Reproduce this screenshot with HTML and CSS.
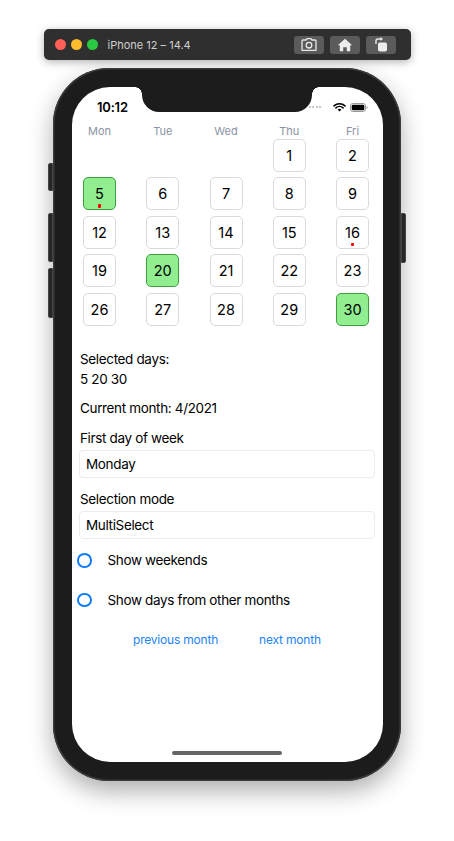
FILE: index.html
```html
<!DOCTYPE html>
<html lang="en">
<head>
<meta charset="utf-8">
<title>iPhone 12 – 14.4</title>
<link rel="stylesheet" href="styles.css">
</head>
<body>
<div class="desk">
  <div class="titlebar">
    <div class="lights">
      <span class="light red"></span>
      <span class="light yellow"></span>
      <span class="light green"></span>
    </div>
    <div class="title">iPhone 12 – 14.4</div>
    <div class="tools">
      <span class="tool">
        <svg width="16" height="13" viewBox="0 0 16 13"><path d="M5 2 L6.2 0.5 H9.8 L11 2 H14 Q15 2 15 3 V11.5 Q15 12.5 14 12.5 H2 Q1 12.5 1 11.5 V3 Q1 2 2 2 Z" fill="none" stroke="#e8e8e8" stroke-width="1.3"/><circle cx="8" cy="7.2" r="2.8" fill="none" stroke="#e8e8e8" stroke-width="1.3"/></svg>
      </span>
      <span class="tool">
        <svg width="16" height="14" viewBox="0 0 16 14"><path d="M8 0.8 L15.2 7.2 H13.2 V13.2 H9.8 V9.2 H6.2 V13.2 H2.8 V7.2 H0.8 Z" fill="#ececec"/></svg>
      </span>
      <span class="tool">
        <svg width="16" height="15" viewBox="0 0 16 15"><rect x="5" y="5.5" width="9" height="9" rx="1.8" fill="#ececec"/><path d="M3 7 V4 Q3 2 5 2 H8" fill="none" stroke="#ececec" stroke-width="1.4"/><path d="M7.5 0 L10 2 L7.5 4 Z" fill="#ececec"/></svg>
      </span>
    </div>
  </div>

  <div class="device">
    <span class="side-btn left mute"></span>
    <span class="side-btn left vol-up"></span>
    <span class="side-btn left vol-down"></span>
    <span class="side-btn right power"></span>

    <div class="screen">
      <div class="notch"></div>

      <div class="status">
        <span class="clock">10:12</span>
        <span class="indicators">
          <span class="signal"><i></i><i></i><i></i><i></i></span>
          <svg class="wifi" width="13" height="10" viewBox="0 0 13 10"><path d="M6.5 9.6 L4.6 7.6 A2.8 2.8 0 0 1 8.4 7.6 Z" fill="#000"/><path d="M2.9 5.9 A5.2 5.2 0 0 1 10.1 5.9" fill="none" stroke="#000" stroke-width="1.5" stroke-linecap="round"/><path d="M1 3.9 A7.9 7.9 0 0 1 12 3.9" fill="none" stroke="#000" stroke-width="1.5" stroke-linecap="round"/></svg>
          <svg class="battery" width="18" height="9" viewBox="0 0 18 9"><rect x="0.5" y="0.5" width="15" height="8" rx="2.2" fill="none" stroke="#999" stroke-width="1"/><rect x="1.7" y="1.7" width="12.6" height="5.6" rx="1.2" fill="#000"/><path d="M16.6 3 Q17.6 3.3 17.6 4.5 Q17.6 5.7 16.6 6 Z" fill="#999"/></svg>
        </span>
      </div>

      <div class="calendar">
        <div class="weekdays">
          <span>Mon</span><span>Tue</span><span>Wed</span><span>Thu</span><span>Fri</span>
        </div>
        <div class="days">
          <span class="blank"></span><span class="blank"></span><span class="blank"></span>
          <span class="day">1</span><span class="day">2</span>
          <span class="day selected">5<i class="mark"></i></span><span class="day">6</span><span class="day">7</span><span class="day">8</span><span class="day">9</span>
          <span class="day">12</span><span class="day">13</span><span class="day">14</span><span class="day">15</span><span class="day">16<i class="mark"></i></span>
          <span class="day">19</span><span class="day selected">20</span><span class="day">21</span><span class="day">22</span><span class="day">23</span>
          <span class="day">26</span><span class="day">27</span><span class="day">28</span><span class="day">29</span><span class="day selected">30</span>
        </div>
      </div>

      <div class="form">
        <p class="label top">Selected days:</p>
        <p class="label">5 20 30</p>
        <p class="label gap">Current month: 4/2021</p>
        <p class="label gap">First day of week</p>
        <div class="field">Monday</div>
        <p class="label gap-lg">Selection mode</p>
        <div class="field">MultiSelect</div>
        <div class="radio-row first"><span class="radio"></span><span>Show weekends</span></div>
        <div class="radio-row"><span class="radio"></span><span>Show days from other months</span></div>
        <div class="nav">
          <span class="link">previous month</span>
          <span class="link">next month</span>
        </div>
      </div>

      <div class="home-indicator"></div>
    </div>
  </div>
</div>
</body>
</html>
```

FILE: styles.css
```css
* { box-sizing: border-box; }

html, body { margin: 0; }

body {
  width: 454px;
  height: 841px;
  background: #fff;
  overflow: hidden;
  font-family: Inter, "Noto Sans", sans-serif;
  color: #000;
}

.desk {
  display: flex;
  flex-direction: column;
  align-items: center;
  padding-top: 29px;
  gap: 8px;
}

/* simulator window title bar */
.titlebar {
  width: 367px;
  height: 31px;
  background: #2f2f2f;
  border-radius: 5px;
  display: flex;
  align-items: center;
  padding: 0 15px 0 11px;
  box-shadow: 0 2px 8px rgba(0, 0, 0, 0.3);
}

.lights { display: flex; gap: 5px; }

.light {
  width: 11px;
  height: 11px;
  border-radius: 50%;
}
.light.red { background: #fe5f57; }
.light.yellow { background: #febc2e; }
.light.green { background: #28c840; }

.title {
  margin-left: 10px;
  font-size: 11px;
  color: #cfcfcf;
  flex: 1;
}

.tools { display: flex; gap: 6px; }

.tool {
  width: 30px;
  height: 18px;
  border-radius: 3px;
  background: #5b5b5b;
  display: flex;
  align-items: center;
  justify-content: center;
}

/* phone body */
.device {
  position: relative;
  width: 348px;
  height: 713px;
  padding: 19px 18px 19px 19px;
  background: #1c1c1c;
  border-radius: 56px;
  box-shadow: inset 0 0 0 1.5px #3b3b3b, 0 10px 24px rgba(0, 0, 0, 0.32);
}

.side-btn {
  position: absolute;
  width: 5px;
  background: #262626;
  border: 1px solid #454545;
}
.side-btn.left { left: -5px; border-radius: 2px 0 0 2px; }
.side-btn.right { right: -5px; border-radius: 0 2px 2px 0; }
.mute { top: 95px; height: 28px; }
.vol-up { top: 145px; height: 49px; }
.vol-down { top: 200px; height: 50px; }
.power { top: 145px; height: 50px; }

.screen {
  position: relative;
  width: 311px;
  height: 675px;
  background: #fff;
  border-radius: 38px;
  overflow: hidden;
  display: flex;
  flex-direction: column;
}

.notch {
  position: absolute;
  top: 0;
  left: 70px;
  width: 170px;
  height: 25px;
  background: #1c1c1c;
  border-radius: 0 0 17px 17px;
}
.notch::before,
.notch::after {
  content: "";
  position: absolute;
  top: 0;
  width: 7px;
  height: 7px;
}
.notch::before {
  left: -7px;
  background: radial-gradient(circle at 0 100%, transparent 6.5px, #1c1c1c 7px);
}
.notch::after {
  right: -7px;
  background: radial-gradient(circle at 100% 100%, transparent 6.5px, #1c1c1c 7px);
}

/* status bar */
.status {
  height: 37px;
  padding: 10px 15px 0 25px;
  display: flex;
  justify-content: space-between;
  align-items: flex-start;
}

.clock {
  font-size: 13px;
  font-weight: 600;
  line-height: 20px;
  letter-spacing: -0.2px;
}

.indicators {
  display: flex;
  align-items: center;
  gap: 4px;
  height: 20px;
}

.signal { display: flex; gap: 1.5px; margin-right: 8px; }
.signal i {
  width: 2px;
  height: 2px;
  border-radius: 50%;
  background: #b5b5b5;
}

/* calendar */
.calendar { padding: 0 14px 0 11px; }

.weekdays,
.days {
  display: grid;
  grid-template-columns: repeat(5, 33px);
  justify-content: space-between;
}

.weekdays span {
  text-align: center;
  font-size: 11px;
  line-height: 15px;
  color: #8a93a3;
}

.days {
  grid-auto-rows: 33px;
  row-gap: 5.4px;
}

.day {
  position: relative;
  display: flex;
  align-items: center;
  justify-content: center;
  border: 1px solid #dadada;
  border-radius: 5px;
  font-size: 14.5px;
}

.day.selected {
  background: #90ee90;
  border-color: #3f9f3f;
}

.mark {
  position: absolute;
  left: 50%;
  top: 26px;
  width: 3.5px;
  height: 3.5px;
  margin-left: -1.75px;
  border-radius: 1px;
  background: #f00;
}

/* settings */
.form {
  padding: 0 8px 0 7px;
  display: flex;
  flex-direction: column;
  letter-spacing: -0.35px;
}

.label {
  margin: 0;
  padding-left: 1px;
  font-size: 13.5px;
  line-height: 20px;
}
.label.top { margin-top: 23px; }
.label.gap { margin-top: 9px; }
.label.gap + .label.gap { margin-top: 10px; }
.label.gap-lg { margin-top: 11px; }

.field {
  margin-top: 2px;
  height: 28px;
  padding: 0 6px;
  display: flex;
  align-items: center;
  border: 1px solid #ececec;
  border-radius: 4px;
  font-size: 13.5px;
}

.radio-row {
  height: 39.5px;
  display: flex;
  align-items: center;
  font-size: 13.5px;
}
.radio-row.first { margin-top: 2px; }

.radio {
  width: 14.5px;
  height: 14.5px;
  margin-left: -2px;
  margin-right: 16px;
  border: 2px solid #127ef7;
  border-radius: 50%;
}

.nav {
  height: 40px;
  display: flex;
  align-items: center;
  padding-left: 54px;
  gap: 41px;
}

.link {
  font-size: 12px;
  letter-spacing: -0.2px;
  color: #2383f5;
}

.home-indicator {
  position: absolute;
  left: 100px;
  bottom: 7px;
  width: 110px;
  height: 4px;
  border-radius: 2px;
  background: #666;
}
```
